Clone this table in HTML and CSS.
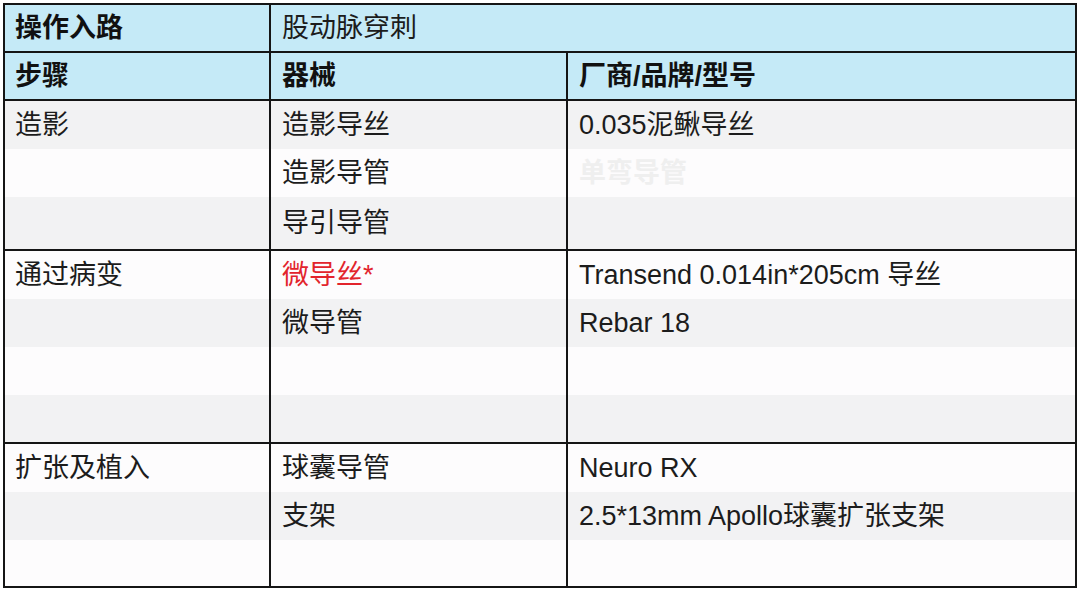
FILE: index.html
```html
<!DOCTYPE html>
<html lang="zh-CN">
<head>
<meta charset="utf-8">
<title>操作入路</title>
<link rel="stylesheet" href="styles.css">
</head>
<body>
<div class="page">
  <div class="grid">
    <div class="c c1 hd h48 b">操作入路</div>
    <div class="c span hd h48">股动脉穿刺</div>

    <div class="c c1 hd h48 b">步骤</div>
    <div class="c c2 hd h48 b">器械</div>
    <div class="c c3 hd h48 b">厂商/品牌/型号</div>

    <div class="c c1 g">造影</div>
    <div class="c c2 g">造影导丝</div>
    <div class="c c3 g">0.035泥鳅导丝</div>

    <div class="c c1 w"></div>
    <div class="c c2 w">造影导管</div>
    <div class="c c3 w"><span class="ghost">单弯导管</span></div>

    <div class="c c1 g end h54"></div>
    <div class="c c2 g end h54">导引导管</div>
    <div class="c c3 g end h54"></div>

    <div class="c c1 w">通过病变</div>
    <div class="c c2 w red">微导丝*</div>
    <div class="c c3 w">Transend 0.014in*205cm 导丝</div>

    <div class="c c1 g"></div>
    <div class="c c2 g">微导管</div>
    <div class="c c3 g">Rebar 18</div>

    <div class="c c1 w"></div>
    <div class="c c2 w"></div>
    <div class="c c3 w"></div>

    <div class="c c1 g end h49"></div>
    <div class="c c2 g end h49"></div>
    <div class="c c3 g end h49"></div>

    <div class="c c1 w">扩张及植入</div>
    <div class="c c2 w">球囊导管</div>
    <div class="c c3 w">Neuro RX</div>

    <div class="c c1 g"></div>
    <div class="c c2 g">支架</div>
    <div class="c c3 g">2.5*13mm Apollo球囊扩张支架</div>

    <div class="c c1 w end"></div>
    <div class="c c2 w end"></div>
    <div class="c c3 w end"></div>
  </div>
</div>
</body>
</html>
```

FILE: styles.css
```css
html, body {
  margin: 0;
  padding: 0;
  background: #ffffff;
}

.page {
  padding: 3px 0 0 3px;
}

.grid {
  width: 1072px;
  display: grid;
  grid-template-columns: 266px 297px 509px;
  border-left: 2px solid #151515;
  border-top: 2px solid #151515;
  font-family: "Liberation Sans", "Noto Sans CJK SC", sans-serif;
  font-size: 27px;
  color: #1c1c1c;
}

.c {
  box-sizing: border-box;
  height: 48px;
  display: flex;
  align-items: center;
  padding-left: 10px;
  border-right: 2px solid #151515;
  line-height: 1;
  white-space: nowrap;
}

.c2, .c3, .span {
  padding-left: 11px;
}

.span {
  grid-column: 2 / 4;
}

.hd {
  background: #c5eaf7;
  border-bottom: 2px solid #151515;
}

.b {
  font-weight: bold;
  color: #111111;
}

.g {
  background: #f2f2f3;
}

.w {
  background: #fdfcfd;
}

.end {
  border-bottom: 2px solid #151515;
}

.h54 {
  height: 54px;
}

.h49 {
  height: 49px;
}

.red {
  color: #e2242c;
}

.ghost {
  color: #efefef;
  font-weight: bold;
}
```
